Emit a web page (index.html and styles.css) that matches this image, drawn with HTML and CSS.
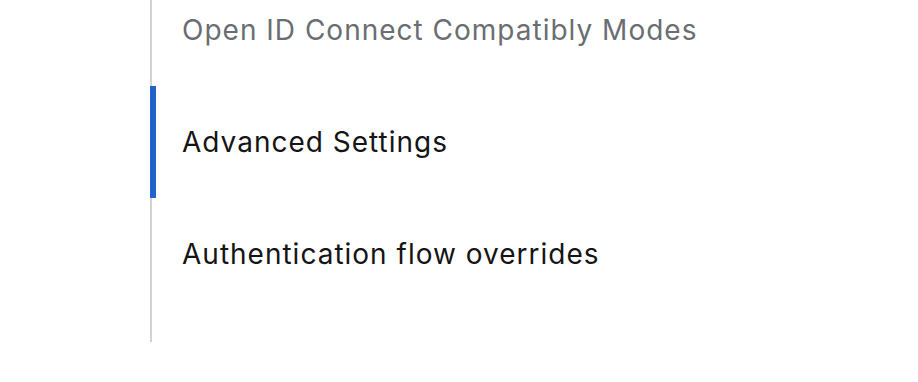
FILE: index.html
```html
<!DOCTYPE html>
<html lang="en">
<head>
<meta charset="utf-8">
<title>Jump links</title>
<link rel="stylesheet" href="styles.css">
</head>
<body>
<nav class="jump-links" aria-label="Jump to section">
  <ul class="jump-list">
    <li class="jump-item"><a class="jump-link" href="#oidc">Open ID Connect Compatibly Modes</a></li>
    <li class="jump-item is-current"><a class="jump-link" href="#advanced">Advanced Settings</a></li>
    <li class="jump-item"><a class="jump-link" href="#auth-flow">Authentication flow overrides</a></li>
  </ul>
</nav>
</body>
</html>
```

FILE: styles.css
```css
html, body {
  margin: 0;
  padding: 0;
  background: #ffffff;
}

body {
  font-family: "Inter", "Open Sans", "Liberation Sans", sans-serif;
  width: 918px;
  height: 382px;
  overflow: hidden;
}

.jump-links {
  margin-left: 150px;
  margin-top: -26px;
  width: 620px;
  border-left: 2px solid #d2d2d2;
  padding-bottom: 32px;
}

.jump-list {
  list-style: none;
  margin: 0;
  padding: 0;
}

.jump-item {
  position: relative;
  height: 112px;
  display: flex;
  align-items: center;
}

.jump-item.is-current::before {
  content: "";
  position: absolute;
  left: -2px;
  top: 0;
  bottom: 0;
  width: 6px;
  background: #1f63cb;
}

.jump-link {
  display: block;
  padding-left: 30px;
  font-size: 28px;
  line-height: 40px;
  letter-spacing: 1px;
  color: #151515;
  text-decoration: none;
  white-space: nowrap;
}

.jump-item:first-child .jump-link {
  color: #6a6e73;
}
```
